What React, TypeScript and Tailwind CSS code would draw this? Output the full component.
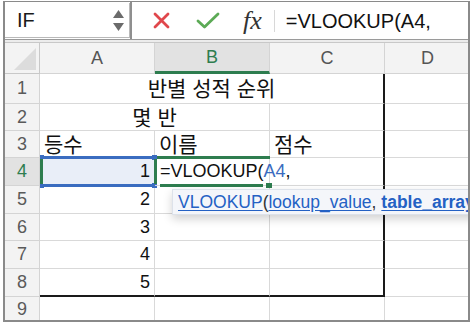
import { ReactNode } from "react"

const font = { fontFamily: '"Liberation Sans", "Noto Sans CJK KR", sans-serif' }

function Ko({ children }: { children: ReactNode }) {
  return <span className="text-[21px] leading-none">{children}</span>
}

function RowHead({ n, h, active }: { n: number; h: string; active?: boolean }) {
  return (
    <div
      className={`${h} flex items-center justify-center border-r border-b border-[#d4d4d4] text-[18px] ${
        active ? "bg-[#e2e2e2] text-[#2e7d4f]" : "bg-[#f3f3f3] text-[#5a5a5a]"
      }`}
    >
      {n}
    </div>
  )
}

function Cell({
  children,
  h,
  cls = "",
}: {
  children?: ReactNode
  h: string
  cls?: string
}) {
  return (
    <div className={`${h} flex items-center border-r border-b border-[#d9d9d9] text-[18px] text-[#111] ${cls}`}>
      {children}
    </div>
  )
}

export default function App() {
  const rows = [
    { n: 5, h: "h-[28px]", v: "2" },
    { n: 6, h: "h-[27px]", v: "3" },
    { n: 7, h: "h-[28px]", v: "4" },
    { n: 8, h: "h-[28px]", v: "5" },
  ]

  return (
    <div className="w-[474px] h-[326px] bg-white overflow-hidden relative" style={font}>
      <div className="ml-[3px] mt-[1px] w-[467px] h-[321px] border-l-2 border-r-2 border-b-2 border-t border-[#8a8a8a] flex flex-col overflow-hidden">
        {/* formula bar */}
        <div className="h-[38px] flex items-stretch border-b border-[#9a9a9a] bg-white shrink-0">
          <div className="w-[125px] flex items-center justify-between pl-[12px] pr-[5px] border-r border-b border-[#b9b9b9] mt-[1px] mb-[1px]">
            <span className="text-[20px] text-[#1a1a1a]">IF</span>
            <div className="flex flex-col items-center gap-[5px]">
              <svg width="11" height="8" viewBox="0 0 11 8">
                <path d="M5.5 0 L11 8 L0 8 Z" fill="#6b6b6b" />
              </svg>
              <svg width="11" height="8" viewBox="0 0 11 8">
                <path d="M0 0 L11 0 L5.5 8 Z" fill="#6b6b6b" />
              </svg>
            </div>
          </div>
          <div className="w-[2px] bg-[#8f8f8f]" />
          <div className="flex items-center pl-[21px] gap-[26px]">
            <svg width="17" height="17" viewBox="0 0 17 17">
              <path d="M2 2 L15 15 M15 2 L2 15" stroke="#e0474c" strokeWidth="2.8" strokeLinecap="round" />
            </svg>
            <svg width="24" height="17" viewBox="0 0 24 17">
              <path d="M2 9 L8.5 15 L22 2" stroke="#5caa56" strokeWidth="2.8" fill="none" strokeLinecap="round" strokeLinejoin="round" />
            </svg>
            <span
              className="text-[26px] italic text-[#333] -ml-[3px] leading-none"
              style={{ fontFamily: '"Liberation Serif", "DejaVu Serif", serif' }}
            >
              fx
            </span>
          </div>
          <div className="w-px h-[22px] bg-[#d8d8d8] self-center ml-[12px]" />
          <div className="flex items-center pl-[11px] text-[20px] text-[#111]">=VLOOKUP(A4,</div>
        </div>
        <div className="h-[3px] bg-[#ececec] border-b border-[#c8c8c8] shrink-0" />

        {/* sheet */}
        <div className="grid grid-cols-[35px_115px_115px_115px_85px] relative">
          {/* header row */}
          <div className="h-[31px] bg-[#f3f3f3] border-r border-b border-[#c8c8c8] relative">
            <svg className="absolute right-[3px] bottom-[3px]" width="22" height="22" viewBox="0 0 22 22">
              <path d="M22 0 L22 22 L0 22 Z" fill="#dcdcdc" />
            </svg>
          </div>
          <div className="h-[31px] bg-[#f3f3f3] border-r border-b border-[#d4d4d4] flex items-center justify-center text-[18px] text-[#555]">
            A
          </div>
          <div className="h-[31px] bg-[#e2e2e2] border-r border-b-[3px] border-b-[#2e7d4f] border-r-[#d4d4d4] flex items-center justify-center text-[18px] text-[#2e7d4f]">
            B
          </div>
          <div className="h-[31px] bg-[#f3f3f3] border-r border-b border-[#d4d4d4] flex items-center justify-center text-[18px] text-[#555]">
            C
          </div>
          <div className="h-[31px] bg-[#f3f3f3] border-b border-[#d4d4d4] flex items-center justify-center text-[18px] text-[#555]">
            D
          </div>

          {/* row 1 */}
          <RowHead n={1} h="h-[30px]" />
          <div className="col-span-3 h-[30px] flex items-center justify-center border-r-2 border-r-[#1a1a1a] border-b border-b-[#d9d9d9] text-[#111]">
            <Ko>반별 성적 순위</Ko>
          </div>
          <div className="h-[30px] border-b border-[#d9d9d9]" />

          {/* row 2 */}
          <RowHead n={2} h="h-[27px]" />
          <div className="col-span-2 h-[27px] flex items-center justify-center border-r border-b border-[#d9d9d9] text-[#111]">
            <Ko>몇 반</Ko>
          </div>
          <div className="h-[27px] border-r-2 border-r-[#1a1a1a] border-b border-b-[#d9d9d9]" />
          <div className="h-[27px] border-b border-[#d9d9d9]" />

          {/* row 3 */}
          <RowHead n={3} h="h-[27px]" />
          <Cell h="h-[27px]" cls="pl-[4px]"><Ko>등수</Ko></Cell>
          <Cell h="h-[27px]" cls="pl-[4px]"><Ko>이름</Ko></Cell>
          <div className="h-[27px] flex items-center pl-[4px] border-r-2 border-r-[#1a1a1a] border-b border-b-[#d9d9d9] text-[#111]">
            <Ko>점수</Ko>
          </div>
          <div className="h-[27px] border-b border-[#d9d9d9]" />

          {/* row 4 */}
          <RowHead n={4} h="h-[28px]" active />
          <div className="h-[28px] relative bg-[#e9eef8] border-r border-b border-[#d9d9d9] flex items-center justify-end pr-[4px] text-[18px] text-[#111]">
            1
            <div className="absolute left-0 right-[-1px] top-[-2px] h-[3px] bg-[#3a6cc0]" />
            <div className="absolute left-0 right-[-1px] bottom-[-2px] h-[3px] bg-[#3a6cc0]" />
            <div className="absolute left-0 top-[-1px] bottom-[-1px] w-[3px] bg-[#2e7d4f]" />
            <div className="absolute left-0 top-[-3px] w-[4px] h-[4px] bg-[#3a6cc0]" />
            <div className="absolute left-0 bottom-[-3px] w-[4px] h-[4px] bg-[#3a6cc0]" />
            <div className="absolute right-[-3px] top-[-3px] w-[5px] h-[5px] bg-[#3a6cc0]" />
            <div className="absolute right-[-3px] bottom-[-3px] w-[5px] h-[5px] bg-[#3a6cc0]" />
          </div>
          <div className="h-[28px] relative border-r border-b border-[#d9d9d9] flex items-center pl-[5px] text-[18px] text-[#111] whitespace-nowrap overflow-visible">
            =VLOOKUP(<span className="text-[#3a6cc0]">A4</span>,
            <div className="absolute left-[-1px] top-[1px] bottom-[1px] w-[3px] bg-[#2e7d4f]" />
            <div className="absolute left-[2px] right-[-1px] top-[-2px] h-[3px] bg-[#2e7d4f]" />
            <div className="absolute left-[5px] right-[6px] bottom-[-2px] h-[3px] bg-[#2e7d4f]" />
            <div className="absolute right-[-3px] bottom-[-3px] w-[6px] h-[5px] bg-[#2e7d4f]" />
          </div>
          <div className="h-[28px] border-r-2 border-r-[#1a1a1a] border-b border-b-[#d9d9d9]" />
          <div className="h-[28px] border-b border-[#d9d9d9]" />

          {rows.map((r) => (
            <div key={r.n} className="contents">
              <RowHead n={r.n} h={r.h} />
              <div
                className={`${r.h} flex items-center justify-end pr-[4px] border-r border-[#d9d9d9] text-[18px] text-[#111] ${
                  r.n === 8 ? "border-b-2 border-b-[#1a1a1a]" : "border-b border-b-[#d9d9d9]"
                }`}
              >
                {r.v}
              </div>
              <div
                className={`${r.h} border-r border-[#d9d9d9] ${
                  r.n === 8 ? "border-b-2 border-b-[#1a1a1a]" : "border-b border-b-[#d9d9d9]"
                }`}
              />
              <div
                className={`${r.h} border-r-2 border-r-[#1a1a1a] ${
                  r.n === 8 ? "border-b-2 border-b-[#1a1a1a]" : "border-b border-b-[#d9d9d9]"
                }`}
              />
              <div className={`${r.h} border-b border-[#d9d9d9]`} />
            </div>
          ))}

          {/* row 9 */}
          <RowHead n={9} h="h-[26px]" />
          <Cell h="h-[26px]" />
          <Cell h="h-[26px]" />
          <Cell h="h-[26px]" />
          <div className="h-[26px] border-b border-[#d9d9d9]" />

          {/* function tooltip */}
          <div className="absolute left-[167px] top-[146px] h-[26px] pl-[5px] pr-[2px] bg-[#f4f6fa] border border-[#dde2ea] shadow-[0_4px_10px_rgba(0,0,0,0.18)] flex items-center text-[17.5px] text-[#2461c4] whitespace-nowrap">
            <span className="underline underline-offset-2">VLOOKUP</span>
            <span className="text-[#333]">(</span>
            <span className="underline underline-offset-2">lookup_value</span>
            <span className="text-[#333]">,&nbsp;</span>
            <span className="underline underline-offset-2 font-bold">table_array</span>
          </div>
        </div>
      </div>
    </div>
  )
}
